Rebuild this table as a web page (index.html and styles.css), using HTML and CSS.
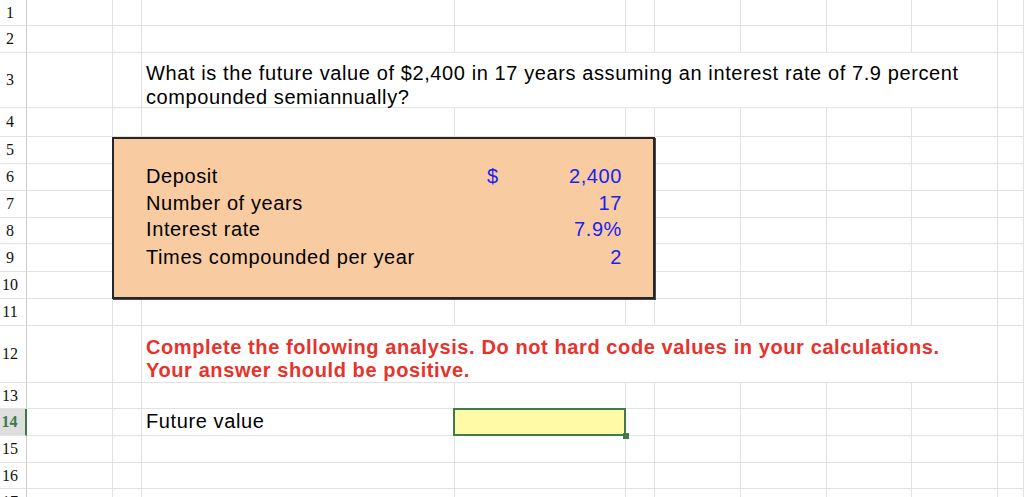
FILE: index.html
```html
<!DOCTYPE html>
<html>
<head>
<meta charset="utf-8">
<link rel="stylesheet" href="styles.css">
</head>
<body>
<div class="sheet">
  <!-- row 1 -->
  <div class="hdr">1</div><div class="c"></div><div class="c"></div><div class="c"></div><div class="c"></div><div class="c"></div><div class="c"></div><div class="c"></div><div class="c"></div><div class="c"></div><div class="c"></div>
  <!-- row 2 -->
  <div class="hdr">2</div><div class="c"></div><div class="c"></div><div class="c"></div><div class="c"></div><div class="c"></div><div class="c"></div><div class="c"></div><div class="c"></div><div class="c"></div><div class="c"></div>
  <!-- row 3 -->
  <div class="hdr">3</div><div class="c"></div><div class="c"></div>
  <div class="c merged text"><span class="lines">What is the future value of $2,400 in 17 years assuming an interest rate of 7.9 percent<br>compounded semiannually?</span></div>
  <div class="c"></div>
  <!-- row 4 -->
  <div class="hdr">4</div><div class="c"></div><div class="c"></div><div class="c"></div><div class="c"></div><div class="c"></div><div class="c"></div><div class="c"></div><div class="c"></div><div class="c"></div><div class="c"></div>

  <!-- rows 5-10: input box over B5:E10 -->
  <div class="box">
    <div class="lbl r6">Deposit</div>
    <div class="val r6 money"><span>$</span><span>2,400</span></div>
    <div class="lbl r7">Number of years</div>
    <div class="val r7">17</div>
    <div class="lbl r8">Interest rate</div>
    <div class="val r8">7.9%</div>
    <div class="lbl r9">Times compounded per year</div>
    <div class="val r9">2</div>
  </div>
  <div class="hdr">5</div><div class="c"></div><div class="c"></div><div class="c"></div><div class="c"></div><div class="c"></div><div class="c"></div>
  <div class="hdr">6</div><div class="c"></div><div class="c"></div><div class="c"></div><div class="c"></div><div class="c"></div><div class="c"></div>
  <div class="hdr">7</div><div class="c"></div><div class="c"></div><div class="c"></div><div class="c"></div><div class="c"></div><div class="c"></div>
  <div class="hdr">8</div><div class="c"></div><div class="c"></div><div class="c"></div><div class="c"></div><div class="c"></div><div class="c"></div>
  <div class="hdr">9</div><div class="c"></div><div class="c"></div><div class="c"></div><div class="c"></div><div class="c"></div><div class="c"></div>
  <div class="hdr">10</div><div class="c"></div><div class="c"></div><div class="c"></div><div class="c"></div><div class="c"></div><div class="c"></div>

  <!-- row 11 -->
  <div class="hdr">11</div><div class="c"></div><div class="c"></div><div class="c"></div><div class="c"></div><div class="c"></div><div class="c"></div><div class="c"></div><div class="c"></div><div class="c"></div><div class="c"></div>
  <!-- row 12 -->
  <div class="hdr">12</div><div class="c"></div><div class="c"></div>
  <div class="c merged text warn"><span class="lines">Complete the following analysis. Do not hard code values in your calculations.<br>Your answer should be positive.</span></div>
  <div class="c"></div>
  <!-- row 13 -->
  <div class="hdr">13</div><div class="c"></div><div class="c"></div><div class="c"></div><div class="c"></div><div class="c"></div><div class="c"></div><div class="c"></div><div class="c"></div><div class="c"></div><div class="c"></div>
  <!-- row 14 -->
  <div class="hdr active">14</div><div class="c"></div><div class="c"></div>
  <div class="c text">Future value</div>
  <div class="c"><div class="answer"><span class="handle"></span></div></div>
  <div class="c"></div><div class="c"></div><div class="c"></div><div class="c"></div><div class="c"></div><div class="c"></div>
  <!-- row 15 -->
  <div class="hdr">15</div><div class="c"></div><div class="c"></div><div class="c"></div><div class="c"></div><div class="c"></div><div class="c"></div><div class="c"></div><div class="c"></div><div class="c"></div><div class="c"></div>
  <!-- row 16 -->
  <div class="hdr">16</div><div class="c"></div><div class="c"></div><div class="c"></div><div class="c"></div><div class="c"></div><div class="c"></div><div class="c"></div><div class="c"></div><div class="c"></div><div class="c"></div>
  <!-- row 17 -->
  <div class="hdr">17</div><div class="c"></div><div class="c"></div><div class="c"></div><div class="c"></div><div class="c"></div><div class="c"></div><div class="c"></div><div class="c"></div><div class="c"></div><div class="c"></div>
</div>
</body>
</html>
```

FILE: styles.css
```css
html, body {
  margin: 0;
  padding: 0;
  background: #ffffff;
  overflow: hidden;
  height: 497px;
}

.sheet {
  display: grid;
  grid-template-columns: 27px 86px 29px 313px 171px 29px 86px 86px 85px 86px 1fr;
  grid-template-rows: 26px 27px 55px 29px 27px 27px 27px 26px 28px 27px 27px 57px 26px 27px 27px 26px 26px;
  width: 1024px;
  font-family: "Liberation Sans", Arial, sans-serif;
  font-size: 20px;
  letter-spacing: 0.6px;
  color: #000;
}

.hdr {
  box-sizing: border-box;
  border-right: 1px solid #cdcdcd;
  border-bottom: 1px solid #e2e2e2;
  padding-right: 6px;
  display: flex;
  align-items: center;
  justify-content: center;
  font-family: "Liberation Serif", "Times New Roman", serif;
  font-size: 16px;
  letter-spacing: 0;
  color: #111;
}

.hdr.active {
  background: #dedede;
  color: #3d7a4a;
  font-weight: bold;
  border-right: 2px solid #3d7a4a;
}

.c {
  box-sizing: border-box;
  border-right: 1px solid #e2e2e2;
  border-bottom: 1px solid #e2e2e2;
  min-width: 0;
  position: relative;
}

.merged {
  grid-column: span 7;
}

.text {
  display: flex;
  align-items: flex-end;
  padding: 0 0 2px 4px;
  line-height: 24px;
  white-space: nowrap;
}

.merged.text {
  padding-bottom: 0;
}

.lines {
  display: block;
  margin-bottom: -2px;
}

.warn {
  color: #e8322b;
  font-weight: bold;
  line-height: 23px;
}

.warn .lines {
  margin-bottom: 0;
}

.box {
  grid-row: 5 / 11;
  grid-column: 3 / 7;
  margin-left: -1px;
  background: #f8cba1;
  border: 2px solid #262626;
  box-shadow: 1px 1px 0 #4a4a4a;
  display: grid;
  grid-template-columns: 28px 313px 171px 1fr;
  grid-template-rows: 25px 27px 27px 26px 28px 1fr;
  position: relative;
  z-index: 1;
}

.lbl, .val {
  display: flex;
  align-items: flex-end;
  padding-bottom: 3px;
  line-height: 24px;
  white-space: nowrap;
}

.lbl {
  grid-column: 2;
  padding-left: 4px;
}

.val {
  grid-column: 3;
  justify-content: flex-end;
  padding-right: 4px;
  color: #1a22f0;
}

.val.money {
  justify-content: space-between;
  padding-left: 32px;
}

.r6 { grid-row: 2; }
.r7 { grid-row: 3; }
.r8 { grid-row: 4; }
.r9 { grid-row: 5; }

.answer {
  position: absolute;
  z-index: 2;
  left: -2px;
  top: -1px;
  right: -1px;
  bottom: -1px;
  background: #fefaa6;
  border: 2px solid #3f7b4b;
}

.handle {
  position: absolute;
  right: -5px;
  bottom: -5px;
  width: 6px;
  height: 6px;
  background: #3f7b4b;
}
```
